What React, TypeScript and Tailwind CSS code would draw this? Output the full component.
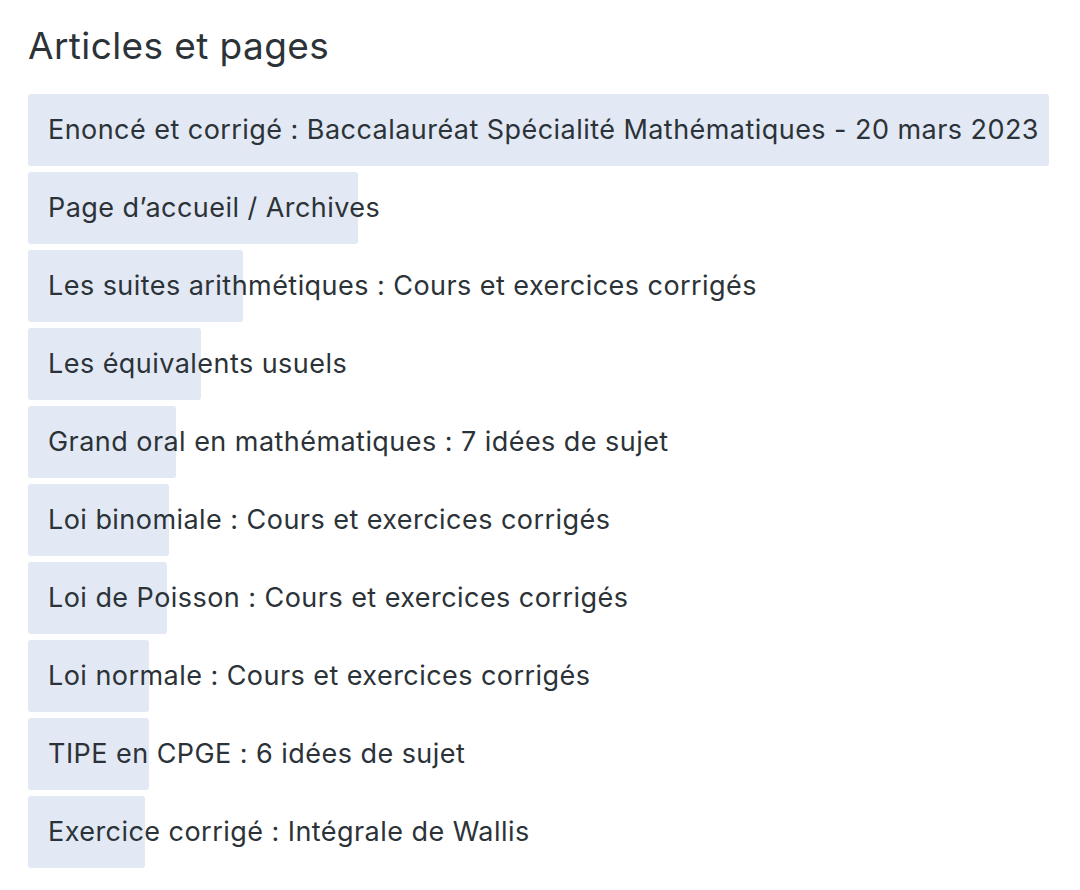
const posts = [
  { title: "Enoncé et corrigé : Baccalauréat Spécialité Mathématiques - 20 mars 2023", width: 1021 },
  { title: "Page d’accueil / Archives", width: 330 },
  { title: "Les suites arithmétiques : Cours et exercices corrigés", width: 215 },
  { title: "Les équivalents usuels", width: 173 },
  { title: "Grand oral en mathématiques : 7 idées de sujet", width: 148 },
  { title: "Loi binomiale : Cours et exercices corrigés", width: 141 },
  { title: "Loi de Poisson : Cours et exercices corrigés", width: 139 },
  { title: "Loi normale : Cours et exercices corrigés", width: 121 },
  { title: "TIPE en CPGE : 6 idées de sujet", width: 121 },
  { title: "Exercice corrigé : Intégrale de Wallis", width: 117 },
];

export default function App() {
  return (
    <div
      className="min-h-[890px] bg-white pl-[28px] pt-[22px] text-[#2c3338]"
      style={{ fontFamily: "Inter, 'Noto Sans', sans-serif" }}
    >
      <h2 className="text-[37px] leading-[48px] font-normal tracking-[0.4px]">Articles et pages</h2>
      <ul className="mt-[24px] flex w-[1021px] flex-col gap-[6px]">
        {posts.map((p) => (
          <li key={p.title} className="relative h-[72px]">
            <div
              className="absolute left-0 top-0 h-full rounded-[3px] bg-[#e2e8f4]"
              style={{ width: p.width }}
            />
            <span className="relative flex h-full items-center whitespace-nowrap pl-[20px] text-[27px] tracking-[0.45px]">
              {p.title}
            </span>
          </li>
        ))}
      </ul>
    </div>
  );
}
